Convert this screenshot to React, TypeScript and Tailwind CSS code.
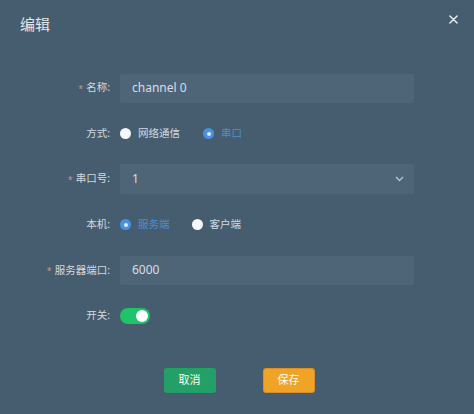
import React from "react";

const font = { fontFamily: '"Noto Sans", "Noto Sans CJK SC", sans-serif' };

function Label({ text, required }: { text: string; required?: boolean }) {
  return (
    <div className="w-[111px] shrink-0 flex items-center justify-end pr-[1px] text-[10.5px] text-[#d3dae0]">
      {required && <span className="text-[9px] text-[#b89a9e] mr-[3px] leading-none">*</span>}
      <span>{text}:</span>
    </div>
  );
}

function Radio({ checked, text }: { checked?: boolean; text: string }) {
  return (
    <div className="flex items-center">
      {checked ? (
        <span className="w-[11px] h-[11px] rounded-full bg-[#4a92dc] flex items-center justify-center">
          <span className="w-[4px] h-[4px] rounded-full bg-[#dbe9f8]" />
        </span>
      ) : (
        <span className="w-[11px] h-[11px] rounded-full bg-[#f5f7f9]" />
      )}
      <span className={"ml-[7px] text-[10.5px] " + (checked ? "text-[#4b8fd6]" : "text-[#d3dae0]")}>{text}</span>
    </div>
  );
}

export default function App() {
  return (
    <div className="w-[474px] h-[414px] bg-[#465d6f] flex flex-col" style={font}>
      <div className="flex justify-between items-start pl-[20px] pr-[16px] pt-[12px] h-[73px]">
        <div className="text-[15px] leading-[24px] text-[#e3e8ec]">编辑</div>
        <svg width="9" height="9" viewBox="0 0 10 10" className="mt-[3px]">
          <path d="M1 1L9 9M9 1L1 9" stroke="#e8edf0" strokeWidth="1.6" strokeLinecap="round" />
        </svg>
      </div>
      <div className="flex flex-col gap-[15.6px]">
        <div className="flex items-center h-[30px]">
          <Label text="名称" required />
          <div className="ml-[9px] w-[294px] h-[29px] bg-[#4e6578] rounded-[2px] flex items-center pl-[12px] text-[12px] text-[#d7dee4]">
            channel 0
          </div>
        </div>
        <div className="flex items-center h-[30px]">
          <Label text="方式" />
          <div className="ml-[9px] flex items-center gap-[23px]">
            <Radio text="网络通信" />
            <Radio text="串口" checked />
          </div>
        </div>
        <div className="flex items-center h-[30px]">
          <Label text="串口号" required />
          <div className="ml-[9px] w-[294px] h-[30px] bg-[#4e6578] rounded-[2px] flex items-center justify-between pl-[12px] pr-[10px] text-[12px] text-[#d7dee4]">
            <span>1</span>
            <svg width="9" height="6" viewBox="0 0 9 6">
              <path d="M1 1L4.5 4.5L8 1" stroke="#b9c5cf" strokeWidth="1.3" fill="none" />
            </svg>
          </div>
        </div>
        <div className="flex items-center h-[30px]">
          <Label text="本机" />
          <div className="ml-[9px] flex items-center gap-[22px]">
            <Radio text="服务端" checked />
            <Radio text="客户端" />
          </div>
        </div>
        <div className="flex items-center h-[30px]">
          <Label text="服务器端口" required />
          <div className="ml-[9px] w-[294px] h-[29px] bg-[#4e6578] rounded-[2px] flex items-center pl-[12px] text-[12px] text-[#d7dee4]">
            6000
          </div>
        </div>
        <div className="flex items-center h-[30px]">
          <Label text="开关" />
          <div className="ml-[9px] w-[30px] h-[16px] rounded-full bg-[#1ec36a] flex items-center justify-end pr-[2px]">
            <span className="w-[12px] h-[12px] rounded-full bg-white" />
          </div>
        </div>
      </div>
      <div className="flex justify-center gap-[47px] mt-[37px] pl-[4px]">
        <div className="w-[52px] h-[25px] rounded-[3px] bg-[#22a066] flex items-center justify-center text-[11px] text-white">
          取消
        </div>
        <div className="w-[52px] h-[25px] rounded-[3px] bg-[#f0a427] border border-[#d8912a] flex items-center justify-center text-[11px] text-white">
          保存
        </div>
      </div>
    </div>
  );
}
